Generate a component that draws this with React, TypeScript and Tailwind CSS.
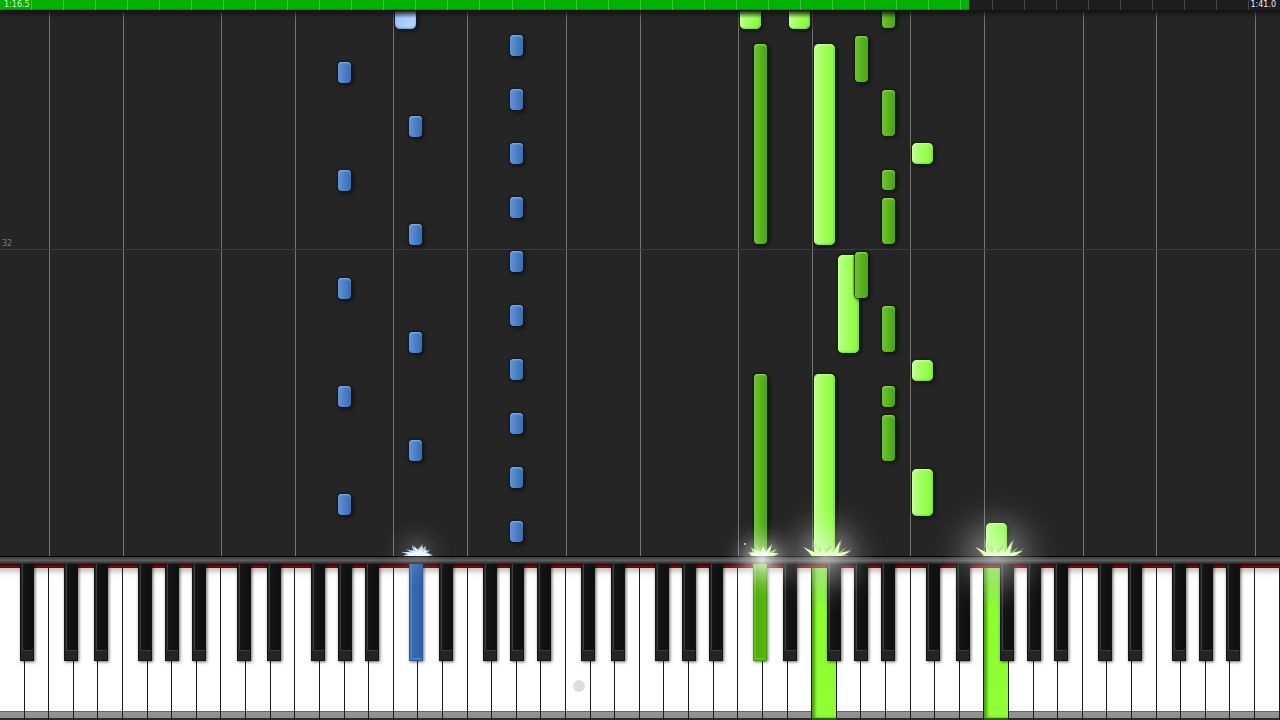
import React from "react";

const STAGE = 1280;
const WHITE_COUNT = 52;
const OCTAVE = (STAGE / WHITE_COUNT) * 7;
const FIRST_C = (STAGE / WHITE_COUNT) * 2;
const pct = (units: number) => `${(units / STAGE) * 100}%`;

const NAMES = ["A", "B", "C", "D", "E", "F", "G"];
const whiteName = (i: number) => `${NAMES[i % 7]}${Math.floor((i + 5) / 7)}`;

const SHARPS = [
  { name: "C#", offset: 15 },
  { name: "D#", offset: 45 },
  { name: "F#", offset: 89 },
  { name: "G#", offset: 116 },
  { name: "A#", offset: 143 },
];

const keyX = (name: string, octave: number) =>
  FIRST_C + (octave - 1) * OCTAVE + (SHARPS.find((s) => s.name === name)?.offset ?? 0);
const sharpX = (name: string, octave: number) => Math.ceil(keyX(name, octave));
const whiteX = (index: number) => Math.floor((STAGE / WHITE_COUNT) * index);

const blackKeys = [
  { name: "A#0", x: keyX("A#", 0) },
  ...[1, 2, 3, 4, 5, 6, 7].flatMap((o) =>
    SHARPS.map((s) => ({ name: `${s.name}${o}`, x: keyX(s.name, o) })),
  ),
];

type Tone = "blue" | "sky" | "lime" | "green";
type Note = { x: number; tone: Tone; top: number; height: number };

const column = (x: number, tone: Tone, spans: [number, number][]): Note[] =>
  spans.map(([top, height]) => ({ x, tone, top, height }));

const notes: Note[] = [
  ...column(sharpX("G#", 2), "blue", [[52, 21], [160, 21], [268, 21], [376, 21], [484, 21]]),
  ...column(sharpX("C#", 3), "blue", [[106, 21], [214, 21], [322, 21], [430, 21]]),
  ...column(sharpX("G#", 3), "blue", [
    [25, 21], [79, 21], [133, 21], [187, 21], [241, 21],
    [295, 21], [349, 21], [403, 21], [457, 21], [511, 21],
  ]),
  ...column(whiteX(16) + 2, "sky", [[-12, 31]]),
  ...column(whiteX(30) + 2, "lime", [[-12, 31]]),
  ...column(whiteX(32) + 2, "lime", [[-12, 31]]),
  ...column(whiteX(33) + 2, "lime", [[34, 201], [364, 200]]),
  ...column(whiteX(34) + 2, "lime", [[245, 98]]),
  ...column(whiteX(37) + 2, "lime", [[133, 21], [350, 21], [459, 47]]),
  ...column(whiteX(40) + 2, "lime", [[513, 60]]),
  ...column(sharpX("C#", 5), "green", [[34, 200], [364, 200]]),
  ...column(sharpX("G#", 5), "green", [[26, 46], [242, 46]]),
  ...column(sharpX("A#", 5), "green", [
    [-12, 30], [80, 46], [160, 20], [188, 46], [296, 46], [376, 21], [405, 46],
  ]),
];

const toneClass: Record<Tone, string> = {
  blue: "rounded-[4px] bg-linear-to-r from-[#6494d4] via-[#4c80c6] to-[#3a6aae] shadow-[0_0_2px_1px_#0c1830,2px_2px_4px_#111,inset_0_2px_2px_-1px_#8db4e6]",
  sky: "rounded-[5px] bg-linear-to-br from-[#7fb0ea] via-[#a4cbf7] to-[#b9d9fc] shadow-[0_0_2px_1px_#101c30,2px_2px_4px_#111,inset_0_-1px_2px_#6f9cd4]",
  lime: "rounded-[5px] bg-linear-to-r from-[#bcff86] via-[#9dff58] to-[#8cf83a] shadow-[0_0_2px_1px_#0f2604,2px_2px_4px_#111,inset_1px_1px_2px_#ccffa6,inset_-1px_-1px_2px_#79d23a]",
  green: "rounded-[4px] bg-linear-to-r from-[#70c034] via-[#5bb41e] to-[#4aa210] shadow-[0_0_2px_1px_#0c1e04,2px_2px_4px_#111,inset_0_2px_2px_-1px_#97dc60]",
};

const isSharp = (tone: Tone) => tone === "blue" || tone === "green";
const whites = Array.from({ length: WHITE_COUNT }, (_, i) => i);
const gridLines = whites.filter((i) => i % 7 === 2 || i % 7 === 5);
const segments = Array.from({ length: 40 }, (_, i) => i);

function SeekBar() {
  return (
    <header
      role="progressbar"
      aria-label="Song position"
      aria-valuemin={0}
      aria-valuemax={101}
      aria-valuenow={76.5}
      className="relative flex h-[10px] shrink-0 items-center justify-between bg-[#1d1d1d] px-1 text-[8px] leading-[10px]"
    >
      <div className="absolute inset-0 flex">
        <div className="border-b border-[#058a05] bg-[#02b102]" style={{ width: pct(969) }} />
      </div>
      <div className="absolute inset-0 flex">
        {segments.map((s) => (
          <i
            key={s}
            className={`flex-1 ${s === 0 ? "" : s < 31 ? "border-l border-[#35c535]" : "border-l border-[#454545]"}`}
          />
        ))}
      </div>
      <span className="relative text-[#d2f7c8]">1:16.5</span>
      <span className="relative text-[#eeeeee]">1:41.0</span>
    </header>
  );
}

function NoteRoll() {
  return (
    <main className="relative min-h-[546px] flex-1 overflow-hidden bg-[#252525]">
      {gridLines.map((i) => (
        <i key={i} className="absolute inset-y-0 w-px bg-[#737373]" style={{ left: pct(whiteX(i)) }} />
      ))}
      <div className="absolute inset-x-0 top-[229px] border-b border-[#3c3c3c] pl-[2px] text-[8px] leading-[10px] text-[#7b7b7b]">
        32
      </div>
      {notes.map((n, i) => (
        <div
          key={i}
          className={`absolute ${toneClass[n.tone]}`}
          style={{
            left: pct(n.x),
            width: pct(isSharp(n.tone) ? 13 : 21),
            top: n.top,
            height: n.height,
          }}
        />
      ))}
      <div className="absolute inset-x-0 top-0 h-2 bg-linear-to-b from-[#111111] to-transparent" />
    </main>
  );
}

function WhiteKey({ index }: { index: number }) {
  const active = index === 33 || index === 40;
  return (
    <button
      type="button"
      aria-label={whiteName(index)}
      aria-pressed={active}
      className={`flex min-w-0 flex-1 flex-col justify-end border-r border-[#1c1c1c] pt-1 ${
        active
          ? "border-b-2 border-b-[#2f5c12] bg-linear-to-b from-[#7bd840] from-3% via-[#8dff2e] via-30% to-[#90ff35] shadow-[inset_3px_0_3px_#4f9d18]"
          : "bg-linear-to-b from-[#c9c9c9] from-3% via-[#fafafa] via-7% to-white to-10%"
      }`}
    >
      {!active && (
        <span className="h-[9px] w-full border-b-2 border-t border-b-[#2c2c2c] border-t-[#666666] bg-[#929292]" />
      )}
    </button>
  );
}

function BlackKey({ name, x }: { name: string; x: number }) {
  const blue = name === "C#3";
  const green = name === "C#5";
  const shell = blue
    ? "bg-[#4576b6] border-[#2d5a9a]"
    : green
      ? "bg-[#62b81c] border-[#479c0c]"
      : "bg-[#242424] border-[#141414]";
  const face = blue
    ? "h-[95px] border-[#5080be] bg-linear-to-r from-[#396cb0] to-[#2d5fa3]"
    : green
      ? "h-[95px] border-[#66c022] bg-linear-to-r from-[#4fac08] to-[#56b90a]"
      : "h-[87px] border-[#3d3d3d] bg-linear-to-r from-[#151515] to-[#0e0e0e]";
  return (
    <button
      type="button"
      aria-label={name}
      aria-pressed={blue || green}
      className={`absolute top-0 flex h-[97px] flex-col border border-t-0 pl-[1px] shadow-[1px_1px_3px_#00000099] ${shell}`}
      style={{ left: pct(x), width: pct(14) }}
    >
      <span className={`w-full border-b border-l ${face}`} />
    </button>
  );
}

function BlueSpark() {
  return (
    <svg className="absolute -top-[18px] h-6 w-10 -translate-x-1/2" style={{ left: pct(418) }} viewBox="0 0 40 24">
      <path d="M5 18 9 16 3 14 12 14 8 11 15 13 14 7 19 12 25 6 23 12 28 8 27 13 32 12 29 15 35 17 32 18Z" fill="#a9cdf5" />
      <path d="M9 18 11 16 7 14 15 15 12 12 18 14 16 8 21 13 25 8 24 14 29 11 27 15 32 16 31 18Z" fill="#eff8ff" />
    </svg>
  );
}

function GreenSpark({ x, wide }: { x: number; wide?: boolean }) {
  return wide ? (
    <svg className="absolute -top-[24px] h-7 w-14 -translate-x-1/2" style={{ left: pct(x) }} viewBox="0 0 56 28">
      <path d="M10 24 8 21 3 15 14 21 11 7 18 19 18 13 22 19 30 13 32 19 41 7 38 20 45 15 41 21 52 16 43 22 48 24Z" fill="#a9e879" opacity=".6" />
      <path d="M11 24 9 21 2 15 15 21 12 13 19 21 22 15 25 21 31 16 32 21 39 9 37 21 50 19 41 24Z" fill="#e6ffc7" />
    </svg>
  ) : (
    <svg className="absolute -top-[24px] h-7 w-10 -translate-x-1/2" style={{ left: pct(x) }} viewBox="0 0 40 28">
      <path d="M8 24 5 20 10 21 8 15 14 20 13 12 18 19 20 14 23 19 29 12 27 20 34 17 30 21 36 21 32 24Z" fill="#b9ed91" />
      <path d="M9 24 8 20 13 21 10 17 18 20 20 15 23 20 28 14 26 21 33 21 29 24Z" fill="#f4ffe9" />
    </svg>
  );
}

const glows = [
  { x: 417, size: "-top-[38px] size-[70px]", tint: "bg-[radial-gradient(closest-side,#ffffff30,#ffffff18_35%,#ffffff08_65%,transparent)]" },
  { x: 762, size: "-top-[38px] size-[84px]", tint: "bg-[radial-gradient(closest-side,#ffffffd0,#ffffff68_30%,#ffffff20_60%,#ffffff08_80%,transparent)]" },
  { x: 826, size: "-top-[60px] size-[120px]", tint: "bg-[radial-gradient(closest-side,#ffffff90,#ffffff48_30%,#ffffff18_60%,#ffffff06_80%,transparent)]" },
  { x: 996, size: "-top-[66px] size-[130px]", tint: "bg-[radial-gradient(closest-side,#ffffff78,#ffffff40_30%,#ffffff16_60%,#ffffff05_80%,transparent)]" },
];

function Effects() {
  return (
    <div aria-hidden="true" className="pointer-events-none absolute inset-x-0 top-0">
      {glows.map((g) => (
        <div key={g.x} className={`absolute -translate-x-1/2 rounded-full ${g.size} ${g.tint}`} style={{ left: pct(g.x) }} />
      ))}
      <BlueSpark />
      <GreenSpark x={763} />
      <GreenSpark x={829} wide />
      <GreenSpark x={1001} wide />
      <i className="absolute -top-[13px] size-[2px] rounded-full bg-[#d5d5d5]" style={{ left: pct(744) }} />
    </div>
  );
}

function Keyboard() {
  return (
    <section aria-label="Piano keyboard" className="relative shrink-0">
      <div className="h-2 border-t border-black bg-linear-to-b from-[#3c3c3c] via-[#5c5c5c] via-50% to-[#292929]" />
      <div className="relative flex h-[156px] bg-white">
        {whites.map((i) => (
          <WhiteKey key={i} index={i} />
        ))}
        <div className="absolute inset-x-0 top-0 h-1 border-t border-[#300000] bg-[#780505]" />
        {blackKeys.map((k) => (
          <BlackKey key={k.name} name={k.name} x={k.x} />
        ))}
        <i className="absolute top-[116px] size-3 rounded-full bg-[#dddddd]" style={{ left: pct(573) }} />
      </div>
      <Effects />
    </section>
  );
}

export default function App() {
  return (
    <div className="flex min-h-screen flex-col overflow-hidden bg-[#252525] font-['DejaVu_Sans',sans-serif]">
      <SeekBar />
      <NoteRoll />
      <Keyboard />
    </div>
  );
}
